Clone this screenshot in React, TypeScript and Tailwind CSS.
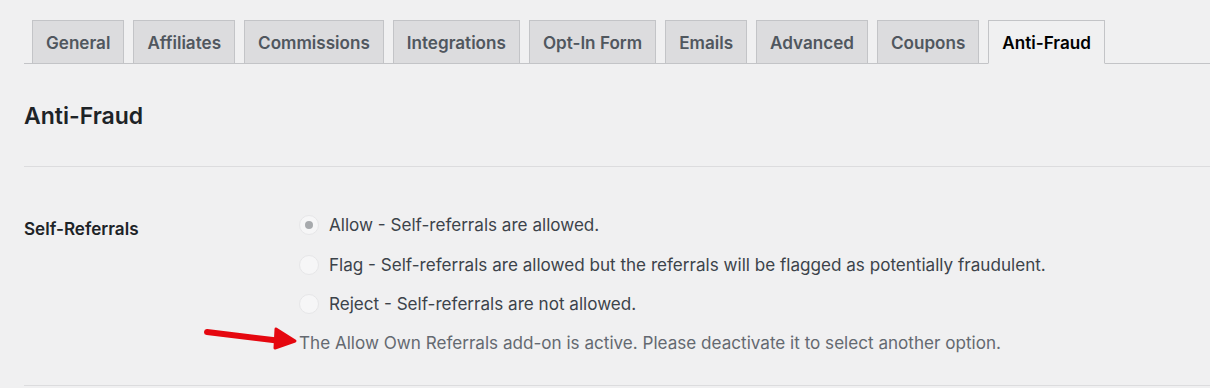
import React from "react";

const tabs = [
  "General",
  "Affiliates",
  "Commissions",
  "Integrations",
  "Opt-In Form",
  "Emails",
  "Advanced",
  "Coupons",
  "Anti-Fraud",
];

const options = [
  { label: "Allow - Self-referrals are allowed.", checked: true },
  { label: "Flag - Self-referrals are allowed but the referrals will be flagged as potentially fraudulent.", checked: false },
  { label: "Reject - Self-referrals are not allowed.", checked: false },
];

function Radio({ checked }: { checked: boolean }) {
  return (
    <span className="flex h-[20px] w-[20px] shrink-0 items-center justify-center rounded-full border border-[#e6e6e8] bg-[#f6f6f7]">
      {checked && <span className="h-[8px] w-[8px] rounded-full bg-[#a7aaad]" />}
    </span>
  );
}

function Arrow() {
  return (
    <svg width="100" height="30" viewBox="0 0 100 30" className="absolute left-[-96px] top-[-10px]">
      <path d="M4 9 L74 17.5" stroke="#e5070f" strokeWidth="6" strokeLinecap="round" fill="none" />
      <path d="M73 6 L92 18 L72 25 Z" fill="#e5070f" stroke="#e5070f" strokeWidth="3" strokeLinejoin="round" />
    </svg>
  );
}

export default function App() {
  return (
    <div
      className="h-[388px] w-[1210px] overflow-hidden bg-[#f0f0f1] pl-[24px]"
      style={{ fontFamily: "Inter, 'Noto Sans', sans-serif" }}
    >
      <div className="flex items-end gap-[9px] border-b border-[#c3c4c7] pl-[8px] pt-[20px]">
        {tabs.map((t) => {
          const active = t === "Anti-Fraud";
          return (
            <div
              key={t}
              className={`-mb-px flex h-[44px] items-center border border-[#c3c4c7] px-[13px] pt-[1px] text-[17.1px] font-semibold ${
                active ? "border-b-[#f0f0f1] bg-[#f0f0f1] text-black" : "bg-[#dcdcde] text-[#50575e]"
              }`}
            >
              {t}
            </div>
          );
        })}
      </div>

      <h2 className="pb-[36px] pt-[38px] text-[23px] font-semibold leading-[28px] text-[#1d2327]">Anti-Fraud</h2>
      <div className="border-t border-[#dcdcde]" />

      <div className="flex pt-[48px]">
        <div className="w-[275px] shrink-0 pt-[1px] text-[17.1px] font-semibold text-[#1d2327]">Self-Referrals</div>
        <div className="flex flex-col">
          {options.map((o) => (
            <div key={o.label} className="mb-[19.5px] flex h-[20px] items-center gap-[10px] text-[17.1px] text-[#3c434a]">
              <Radio checked={o.checked} />
              <span>{o.label}</span>
            </div>
          ))}
          <div className="relative mt-[-1px] text-[17.1px] leading-[20px] text-[#646970]">
            <Arrow />
            The Allow Own Referrals add-on is active. Please deactivate it to select another option.
          </div>
        </div>
      </div>
      <div className="mt-[32px] border-t border-[#dcdcde]" />
    </div>
  );
}
